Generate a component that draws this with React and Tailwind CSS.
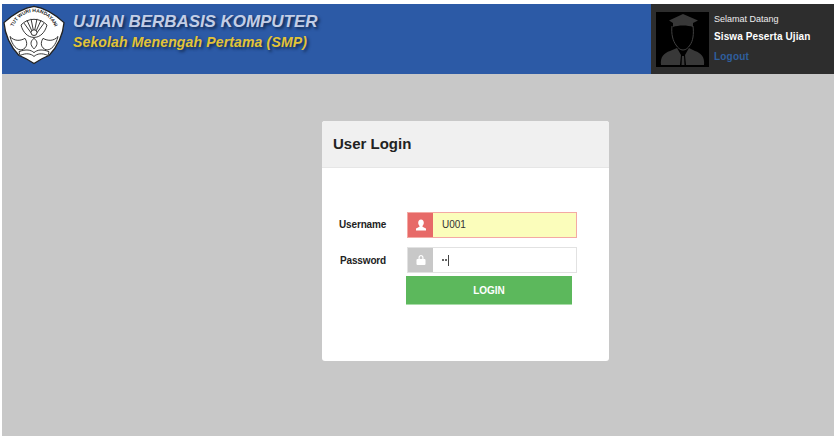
const Logo = () => (
  <svg viewBox="0 0 64 64" preserveAspectRatio="none" className="w-16 h-[61px] shrink-0">
    <path d="M32 1.5 C42 3 53 10 62 18.5 C61 31 56 43 47 53 C42 55 37 58 32 61.5 C27 58 22 55 17 53 C8 43 3 31 2 18.5 C11 10 22 3 32 1.5 Z" fill="#fff" stroke="#222" strokeWidth="1.3" />
    <path id="logoArc" d="M9 30 C12 16 21 7.5 32 7.5 C43 7.5 52 16 55 30" fill="none" />
    <text fontFamily="'Liberation Sans', sans-serif" fontSize="5" fontWeight="700" fill="#222">
      <textPath href="#logoArc" startOffset="50%" textAnchor="middle">TUT WURI HANDAYANI</textPath>
    </text>
    <g fill="none" stroke="#333" strokeWidth="1">
      <path d="M22 19 L31 32 M25 16 L31.5 31 M29 14.5 L32 30 M35 14.5 L32 30 M39 16 L32.5 31 M42 19 L33 32" />
      <path d="M19 21 C21 29 26 34 32 34 C38 34 43 29 45 21 C38 13 26 13 19 21 Z" />
      <circle cx="32" cy="29" r="3" fill="#fff" />
      <path d="M8 33 C12 38 18 38 23 35 C26 40 25 45 20 47 C15 48 10 42 8 33 Z" />
      <path d="M56 33 C52 38 46 38 41 35 C38 40 39 45 44 47 C49 48 54 42 56 33 Z" />
      <path d="M32 35 C36 38 36 42 32 46 C28 42 28 38 32 35 Z" />
      <path d="M17 49 C24 46 29 47 32 50 C35 47 40 46 47 49 L46 53 C40 50 35 51 32 54 C29 51 24 50 18 53 Z" fill="#fff" />
    </g>
  </svg>
);

const Avatar = () => (
  <div className="w-[53px] h-[55px] bg-black shrink-0">
    <svg viewBox="0 0 53 55" className="w-full h-full" fill="#383838">
      {/* mortarboard */}
      <path d="M27 2 L42 8.5 L37 11 L37 15 C32 13 22 13 17 15 L17 11 L13 8.5 Z" />
      {/* outline of the face */}
      <path d="M16 14 C15 22 17 29 20 33 C22 36 24 38 27 38 C30 38 32 36 34 33 C37 29 38 22 37 14" fill="none" stroke="#404040" strokeWidth="1" />
      {/* shoulders */}
      <path d="M5 53 C4 45 8 41 14 39 L21 36 L25 43 L24 53 Z" />
      <path d="M48 53 C49 45 45 41 39 39 L33 36 L29 43 L30 53 Z" />
      <path d="M26 44 L28 44 L28.5 53 L25.5 53 Z" />
    </svg>
  </div>
);

const App = () => {
  return (
    <div className="h-[439px] w-[836px] bg-white pt-1 px-[2px] pb-[3px] flex flex-col font-['Liberation_Sans',Arial,sans-serif]">
      {/* Header */}
      <header className="h-[70px] bg-[#2c5aa6] flex justify-between shrink-0">
        <div className="flex pt-[1px]">
          <Logo />
          <div className="pl-[7px] italic font-bold">
            <h1 className="text-[17px] leading-[20px] pt-[7px] tracking-[-0.05px] text-[#c3cee6] [text-shadow:2px_2px_3px_#12294f]">UJIAN BERBASIS KOMPUTER</h1>
            <p className="text-[14px] leading-4 tracking-[0.15px] pt-[2px] text-[#e3c437] [text-shadow:2px_2px_3px_#12294f]">Sekolah Menengah Pertama (SMP)</p>
          </div>
        </div>
        <div className="w-[183px] bg-[#2d2d2d] flex items-center pl-[5px] gap-[5px]">
          <Avatar />
          <div className="pb-[2px]">
            <p className="text-[9px] leading-3 text-[#eee]">Selamat Datang</p>
            <p className="text-[10px] leading-3 font-bold text-white mt-[6px] tracking-[0.1px]">Siswa Peserta Ujian</p>
            <a className="block text-[10px] leading-3 font-bold text-[#2f5f9e] mt-[8px] tracking-[0.2px]">Logout</a>
          </div>
        </div>
      </header>

      {/* Login */}
      <main className="flex-1 bg-[#c8c8c8] pt-[47px] pl-[320px]">
        <div className="w-[287px] h-[240px] bg-white rounded-[3px] overflow-hidden">
          <div className="h-[47px] bg-[#f0f0f0] border-b border-[#e6e6e6] pl-[11px] flex items-center">
            <h2 className="text-[15px] font-bold text-[#222]">User Login</h2>
          </div>
          <form className="pt-[44px]">
            <div className="flex items-center h-[26px]">
              <label className="w-[85px] pl-[17px] pb-[2px] text-[10px] font-bold text-[#222] shrink-0 tracking-[-0.15px]">Username</label>
              <div className="w-[170px] h-[26px] flex border border-[#f4a9a4] bg-[#fbfdbb]">
                <span className="w-[25px] bg-[#e76a68] flex items-center justify-center shrink-0">
                  <svg viewBox="0 0 12 12" className="w-3 h-3" fill="#fff">
                    <path d="M6 0.5 C7.8 0.5 8.8 1.8 8.8 3.8 C8.8 5.2 8.2 6.3 7.5 6.9 L7.5 7.8 L11 9.5 L11 11.5 L1 11.5 L1 9.5 L4.5 7.8 L4.5 6.9 C3.8 6.3 3.2 5.2 3.2 3.8 C3.2 1.8 4.2 0.5 6 0.5 Z" />
                  </svg>
                </span>
                <span className="pl-[9px] text-[10px] leading-[24px] text-[#333]">U001</span>
              </div>
            </div>
            <div className="flex items-center h-[26px] mt-[9px]">
              <label className="w-[85px] pl-[18px] text-[10px] font-bold text-[#222] shrink-0 tracking-[-0.15px]">Password</label>
              <div className="w-[170px] h-[26px] flex border border-[#e2e2e2] bg-white">
                <span className="w-[25px] bg-[#c8c8c8] flex items-center justify-center shrink-0">
                  <svg viewBox="0 0 12 12" className="w-3 h-3" fill="#fff">
                    <path d="M3.5 5 L3.5 3.5 C3.5 2 4.6 1 6 1 C7.4 1 8.5 2 8.5 3.5 L8.5 5 L7.3 5 L7.3 3.5 C7.3 2.7 6.7 2.2 6 2.2 C5.3 2.2 4.7 2.7 4.7 3.5 L4.7 5 Z" />
                    <rect x="1.5" y="5" width="9" height="6" rx="1" />
                  </svg>
                </span>
                <span className="pl-[9px] flex items-center gap-[1px]">
                  <span className="w-[2px] h-[2px] rounded-full bg-[#333]" />
                  <span className="w-[2px] h-[2px] rounded-full bg-[#333]" />
                  <span className="w-px h-[11px] bg-[#444]" />
                </span>
              </div>
            </div>
            <button type="button" className="block w-[166px] h-[29px] mt-[3px] ml-[84px] bg-[#5cb85c] border-b border-[#a8dca8] text-white text-[10px] font-bold">LOGIN</button>
          </form>
        </div>
      </main>
    </div>
  );
};

export default App;
